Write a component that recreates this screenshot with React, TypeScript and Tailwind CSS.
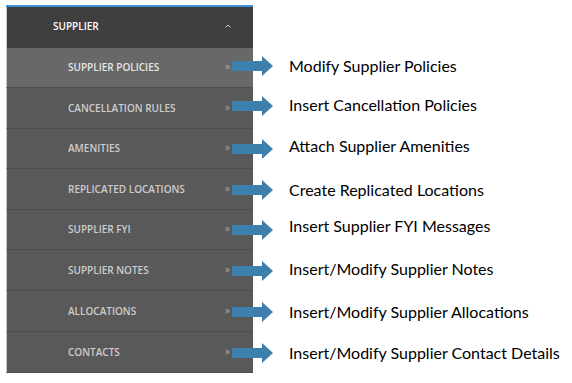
const items = [
  { name: "SUPPLIER POLICIES", note: "Modify Supplier Policies", h: "h-[40px]", active: true, arrow: "mb-[4px]", label: "mb-[4px]" },
  { name: "CANCELLATION RULES", note: "Insert Cancellation Policies", h: "h-[41px]", arrow: "mb-[5px]", label: "mb-[7px]" },
  { name: "AMENITIES", note: "Attach Supplier Amenities", h: "h-[40px]", arrow: "", label: "mb-[6px]" },
  { name: "REPLICATED LOCATIONS", note: "Create Replicated Locations", h: "h-[41px]", arrow: "", label: "mt-[1px]" },
  { name: "SUPPLIER FYI", note: "Insert Supplier FYI Messages", h: "h-[40px]", arrow: "", label: "mb-[8px]" },
  { name: "SUPPLIER NOTES", note: "Insert/Modify Supplier Notes", h: "h-[41px]", arrow: "", label: "mb-[3px]" },
  { name: "ALLOCATIONS", note: "Insert/Modify Supplier Allocations", h: "h-[41px]", arrow: "", label: "mt-[1px]" },
  { name: "CONTACTS", note: "Insert/Modify Supplier Contact Details", h: "h-[41px]", arrow: "", label: "mt-[1px]" },
];

function Arrow() {
  return (
    <svg width="41" height="20" viewBox="0 0 41 20" className="shrink-0">
      <path d="M0 5 H30 V0 L41 10 L30 20 V15 H0 Z" fill="#3d7fad" />
    </svg>
  );
}

export default function App() {
  return (
    <div className="w-[572px] h-[383px] bg-white pt-[5px] pl-[6px] font-['Open_Sans',sans-serif]">
      <div className="w-[247px] h-[2px] bg-[#3d8fd6]" />
      <div className="w-[247px] h-[41px] bg-[#3f3f3f] border-l border-[#c8c8c8] flex items-center justify-between pl-[46px] pr-[22px]">
        <span className="text-[10px] font-semibold text-white mb-[2px]">SUPPLIER</span>
        <svg width="6" height="4" viewBox="0 0 6 4" className="mb-[3px]">
          <path d="M0.5 3.5 L3 1 L5.5 3.5" stroke="#cfcfcf" strokeWidth="1" fill="none" />
        </svg>
      </div>
      {items.map((it) => (
        <div key={it.name} className={`flex items-center ${it.h}`}>
          <div
            className={`w-[247px] h-full shrink-0 flex items-center justify-between border-l border-[#c8c8c8] border-b border-b-[#4e4e4e] pl-[61px] pr-[23px] ${
              it.active ? "bg-[#686868]" : "bg-[#595959]"
            }`}
          >
            <span className={`text-[10px] font-semibold ${it.active ? "text-[#e6e6e6]" : "text-[#cdcdcd]"}`}>
              {it.name}
            </span>
            <span className="text-[10px] text-[#a8a8a8] mb-[2px]">»</span>
          </div>
          <div className={`-ml-[21px] flex ${it.arrow}`}>
            <Arrow />
          </div>
          <span
            className={`ml-[16px] text-[16px] text-black whitespace-nowrap font-['Lato',sans-serif] ${it.label}`}
          >
            {it.note}
          </span>
        </div>
      ))}
    </div>
  );
}
